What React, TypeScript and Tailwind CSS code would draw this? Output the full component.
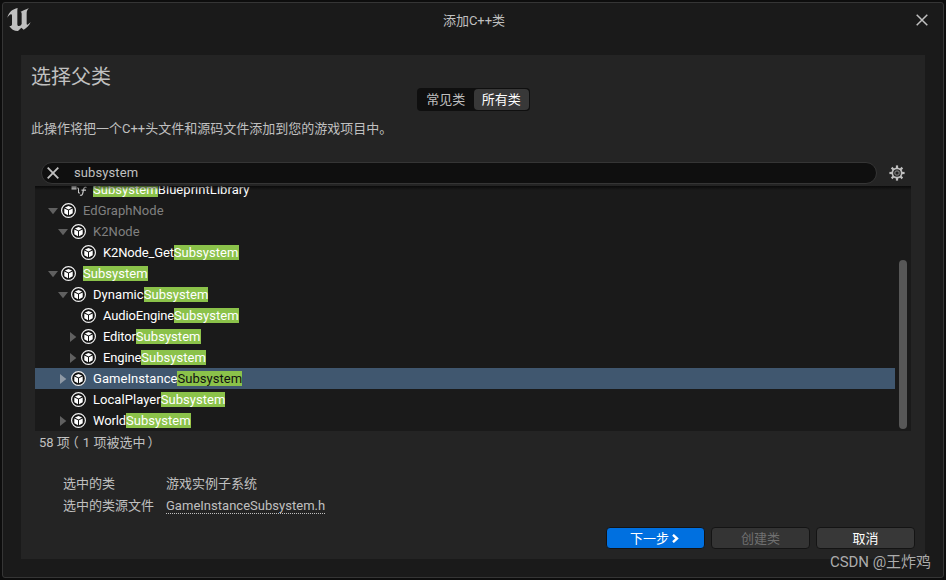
import { useState } from 'react';
import type { ReactNode } from 'react';

interface ClassRow {
  name: string;
  level: number;
  arrow?: 'open' | 'closed';
  dimmed?: boolean;
  tight?: boolean;
  icon?: 'function';
}

const QUERY = 'subsystem';

const ROWS: ClassRow[] = [
  { name: 'SubsystemBlueprintLibrary', level: 1, icon: 'function' },
  { name: 'EdGraphNode', level: 0, arrow: 'open', dimmed: true },
  { name: 'K2Node', level: 1, arrow: 'open', dimmed: true },
  { name: 'K2Node_GetSubsystem', level: 2, tight: true },
  { name: 'Subsystem', level: 0, arrow: 'open' },
  { name: 'DynamicSubsystem', level: 1, arrow: 'open' },
  { name: 'AudioEngineSubsystem', level: 2, tight: true },
  { name: 'EditorSubsystem', level: 2, arrow: 'closed', tight: true },
  { name: 'EngineSubsystem', level: 2, arrow: 'closed', tight: true },
  { name: 'GameInstanceSubsystem', level: 1, arrow: 'closed' },
  { name: 'LocalPlayerSubsystem', level: 1 },
  { name: 'WorldSubsystem', level: 1, arrow: 'closed', tight: true },
];

const INDENTS = ['pl-[13px]', 'pl-[23px]', 'pl-[33px]'];

function UnrealLogo() {
  return (
    <svg className="h-[26px] w-[26px]" viewBox="18 21 78 78" fill="#c0c0c0">
      <path d="M53 24C38 27 26 36 22 53C26 47 30 43 33 43C35 43 36 45 36 48V73C36 77 33 79 28 78C33 87 42 93 54 93L64 83L71 89C80 84 88 77 92 66C88 70 84 74 82 74C80 74 80 72 80 70V39C80 33 83 28 87 24C79 28 71 31 61 36C64 36 65 38 65 42V72C63 76 61 78 57 78C53 78 52 75 52 71V35C52 31 52 27 53 24Z" />
    </svg>
  );
}

function ClassIcon() {
  return (
    <svg className="h-4 w-4 shrink-0" viewBox="0 0 16 16">
      <circle cx="7.5" cy="7.5" r="6.9" fill="#111" stroke="#f2f2f2" strokeWidth="1.2" />
      <path d="M7.5 2.9 11.2 4.6 7.5 6.4 3.8 4.6Z" fill="#fff" />
      <path d="M3.3 5.4 7 7.2V12.2L3.3 10.2Z" fill="#fff" />
      <path d="M11.7 5.4 8 7.2V12.2L11.7 10.2Z" fill="#fff" />
    </svg>
  );
}

function FunctionIcon() {
  return (
    <svg className="h-4 w-4 shrink-0" viewBox="0 0 16 16" fill="none" stroke="#c8c8c8">
      <path d="M0.5 3.5H5.5V7.5H0.5Z" fill="#c8c8c8" stroke="none" />
      <path d="M6 6H7.5V11H9" strokeWidth="1" />
      <path d="M15.5 5.4C13.8 4.4 12.9 5.6 12.6 7.4L11.8 11C11.5 13 10.5 13.8 9 13M10.5 8.2H15" strokeWidth="1.2" />
    </svg>
  );
}

function Arrow({ state, bright }: { state?: 'open' | 'closed'; bright: boolean }) {
  return (
    <svg className="h-[10px] w-[10px] shrink-0" viewBox="0 0 10 10" fill={bright ? '#8f9aa6' : '#606060'}>
      {state === 'open' && <path d="M0 2H10L5 8.3Z" />}
      {state === 'closed' && <path d="M2 0 8.3 5 2 10Z" />}
    </svg>
  );
}

function GearIcon() {
  const teeth = [0, 45, 90, 135, 180, 225, 270, 315];
  return (
    <svg className="h-4 w-4" viewBox="0 0 16 16" fill="none" stroke="#c0c0c0">
      <circle cx="8" cy="8" r="4.7" strokeWidth="1.7" />
      <circle cx="8" cy="8" r="2.2" stroke="#777" strokeWidth="1.2" />
      {teeth.map((angle) => (
        <path key={angle} d="M8 0.4V3" strokeWidth="2.2" transform={`rotate(${angle} 8 8)`} />
      ))}
    </svg>
  );
}

function CrossIcon({ className }: { className: string }) {
  return (
    <svg className={className} viewBox="0 0 12 12" fill="none" stroke="currentColor">
      <path d="M0.7 0.7 11.3 11.3M11.3 0.7 0.7 11.3" />
    </svg>
  );
}

function HighlightedName({ name, selected, tight }: { name: string; selected: boolean; tight?: boolean }) {
  const start = name.toLowerCase().indexOf(QUERY);
  if (start < 0) return <span>{name}</span>;
  const end = start + QUERY.length;
  return (
    <span className="flex">
      <span className={tight ? 'tracking-[-0.15px]' : ''}>{name.slice(0, start)}</span>
      <span className={`bg-[#8bc24a] ${selected ? 'text-[#101010]' : 'text-white'}`}>{name.slice(start, end)}</span>
      {name.slice(end)}
    </span>
  );
}

function DialogButton({ children, className }: { children: ReactNode; className: string }) {
  return (
    <button className={`flex h-[22px] w-[99px] items-center justify-center rounded-[4px] border border-[#141414] ${className}`}>
      {children}
    </button>
  );
}

export default function App() {
  const [selected, setSelected] = useState('GameInstanceSubsystem');
  const [tab, setTab] = useState('所有类');

  return (
    <div className="relative h-[580px] w-[946px] overflow-hidden bg-[#0d0d0d] p-[2px] pr-[1px] font-[Roboto,'Noto_Sans_CJK_SC',sans-serif] text-[13px] leading-[15px] text-[#c0c0c0]">
      <div className="flex h-[576px] w-[942px] flex-col rounded-[3px] border border-[#353535] bg-[#1a1a1a]">
        {/* Title bar */}
        <div className="flex h-[52px] items-start justify-between pt-1 pr-[15px] pl-[3px]">
          <UnrealLogo />
          <span className="pt-[6px]">添加C++类</span>
          <CrossIcon className="mt-[7px] h-3 w-3 stroke-[1.5]" />
        </div>

        <div className="mx-[18px] flex h-[504px] w-[904px] flex-col bg-[#242424]">
          <h1 className="h-[33px] pt-[10px] pl-[10px] text-[20px] leading-[24px]">选择父类</h1>

          {/* Class filter */}
          <div className="mr-[-1px] flex h-[23px] w-[113px] self-center rounded-[4px] bg-[#0f0f0f] p-px">
            {['常见类', '所有类'].map((label) => (
              <button
                key={label}
                onClick={() => setTab(label)}
                className={`flex w-[56px] items-center justify-center rounded-[4px] ${tab === label ? 'bg-[#383838] text-white' : ''}`}
              >
                {label}
              </button>
            ))}
          </div>

          <p className="h-[51px] pt-[10px] pl-[10px]">此操作将把一个C++头文件和源码文件添加到您的游戏项目中。</p>

          {/* Search */}
          <div className="flex h-6 items-center pr-5 pl-5">
            <div className="mt-[-2px] flex h-[22px] w-[836px] items-center rounded-full border border-[#353535] bg-[#0f0f0f] pl-[5px]">
              <CrossIcon className="h-3 w-3 stroke-[1.8]" />
              <span className="mt-[-2px] pl-[15px] tracking-[0.1px]">{QUERY}</span>
            </div>
            <div className="mt-[-2px] ml-[12px]">
              <GearIcon />
            </div>
          </div>

          {/* Class tree */}
          <div className="relative ml-[14px] flex h-[245px] w-[876px] shrink-0 overflow-hidden bg-[#1a1a1a]">
            <div className="mt-[-7px] flex w-[860px] flex-col">
              {ROWS.map((row) => {
                const active = row.name === selected;
                return (
                  <div
                    key={row.name}
                    onClick={() => setSelected(row.name)}
                    className={`flex h-[21px] shrink-0 items-center tracking-[0.05px] ${INDENTS[row.level]} ${active ? 'bg-[#40576f]' : ''} ${row.dimmed ? 'text-[#808080]' : 'text-white'}`}
                  >
                    <Arrow state={row.arrow} bright={active} />
                    <span className="mr-[6px] ml-[3px]">{row.icon === 'function' ? <FunctionIcon /> : <ClassIcon />}</span>
                    <HighlightedName name={row.name} selected={active} tight={row.tight} />
                  </div>
                );
              })}
            </div>
            <div className="mt-[74px] ml-1 h-[169px] w-2 rounded-full bg-[#575757]" />
            <div className="absolute inset-x-0 top-0 h-[4px] bg-linear-to-b from-black/60 to-transparent" />
          </div>

          <p className="pt-[4px] pl-[18px]">
            58 项<span className="mr-1 -ml-1">（</span>1 项被选中<span className="ml-[2px]">）</span>
          </p>

          {/* Selection details */}
          <div className="grid grid-cols-[103px_1fr] gap-y-[7px] pt-[26px] pl-[42px]">
            <span>选中的类</span>
            <span>游戏实例子系统</span>
            <span>选中的类源文件</span>
            <span>
              <a className="inline-block border-b border-dotted border-[#c0c0c0] tracking-[0.02px]">{selected}.h</a>
            </span>
          </div>

          {/* Footer */}
          <div className="mt-auto flex justify-end gap-[6px] pr-[10px] pb-[10px]">
            <DialogButton className="bg-[#0070e0] pr-[2px] text-white">
              下一步
              <svg className="ml-[3px] h-[9px] w-[7px]" viewBox="0 0 7 9" fill="none" stroke="#fff" strokeWidth="2.4">
                <path d="M1 0.8 5 4.5 1 8.2" />
              </svg>
            </DialogButton>
            <DialogButton className="bg-[#343434] text-[#707070]">创建类</DialogButton>
            <DialogButton className="bg-[#383838] text-white">取消</DialogButton>
          </div>
        </div>
      </div>
      <span className="absolute top-[553px] left-[830px] text-[15px] leading-[18px] tracking-[-0.05px] whitespace-nowrap text-[#acacac]">CSDN @王炸鸡</span>
    </div>
  );
}
